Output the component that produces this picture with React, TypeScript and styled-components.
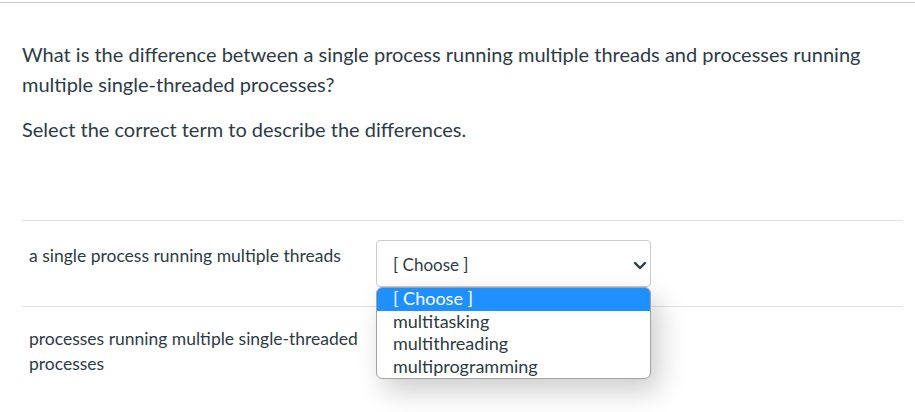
import { FC } from "react"
import styled, { createGlobalStyle } from "styled-components"

const GlobalStyle = createGlobalStyle`
	html, body {
		margin: 0;
		padding: 0;
		background: #ffffff;
	}
	body {
		font-family: Lato, "Open Sans", sans-serif;
		color: #2d3b45;
	}
`

const Page = styled.div`
	margin-top: 2px;
	border-top: 1px solid #c7cdd1;
	width: 915px;
	height: 409px;
	overflow: hidden;
`

const Question = styled.div`
	padding: 36px 0 0 22px;
	width: 860px;
`

const Para = styled.p`
	margin: 0 0 15px;
	font-size: 20px;
	line-height: 30px;
`

const Answers = styled.div`
	margin: 76px 12px 0 22px;
`

const Row = styled.div`
	display: flex;
	border-top: 1px solid #dfe3e6;
	padding: 19px 0 19px 7px;
`

const Label = styled.div<{ $offset: number }>`
	width: 347px;
	font-size: 17.5px;
	line-height: 25px;
	margin-top: ${(p) => p.$offset}px;
`

const SelectWrap = styled.div`
	position: relative;
`

const SelectBox = styled.div`
	box-sizing: border-box;
	width: 275px;
	height: 47px;
	border: 1px solid #c7cdd1;
	border-radius: 4px;
	display: flex;
	align-items: center;
	justify-content: space-between;
	padding: 2px 3px 0 16px;
	font-size: 17px;
`

const Chevron = styled.svg`
	width: 14px;
	height: 14px;
	margin-top: 1px;
`

const Menu = styled.ul`
	position: absolute;
	left: 0;
	top: 47px;
	box-sizing: border-box;
	width: 275px;
	margin: 0;
	padding: 0;
	list-style: none;
	background: #ffffff;
	border: 1px solid #a3a3a3;
	border-radius: 6px;
	overflow: hidden;
	box-shadow: 8px 12px 28px rgba(0, 0, 0, 0.2);
	z-index: 2;
`

const Option = styled.li<{ $active?: boolean }>`
	padding: 0 16px 1.5px;
	font-size: 18px;
	line-height: 21px;
	background: ${(p) => (p.$active ? "#1e90ff" : "transparent")};
	color: ${(p) => (p.$active ? "#ffffff" : "#2d3b45")};
`

const options = ["[ Choose ]", "multitasking", "multithreading", "multiprogramming"]

const Select: FC<{ open?: boolean }> = ({ open }) => (
	<SelectWrap>
		<SelectBox>
			<span>[ Choose ]</span>
			<Chevron viewBox="0 0 14 14">
				<polyline
					points="2,5 7,10 12,5"
					fill="none"
					stroke="#2d3b45"
					strokeWidth="2.4"
					strokeLinecap="round"
					strokeLinejoin="round"
				/>
			</Chevron>
		</SelectBox>
		{open && (
			<Menu>
				{options.map((o, i) => (
					<Option key={o} $active={i === 0}>
						{o}
					</Option>
				))}
			</Menu>
		)}
	</SelectWrap>
)

export default function App() {
	return (
		<>
			<GlobalStyle />
			<Page>
				<Question>
					<Para>
						What is the difference between a single process running multiple
						threads and processes running multiple single-threaded processes?
					</Para>
					<Para>Select the correct term to describe the differences.</Para>
				</Question>
				<Answers>
					<Row>
						<Label $offset={3}>a single process running multiple threads</Label>
						<Select open />
					</Row>
					<Row>
						<Label $offset={0}>processes running multiple single-threaded processes</Label>
						<Select />
					</Row>
				</Answers>
			</Page>
		</>
	)
}
